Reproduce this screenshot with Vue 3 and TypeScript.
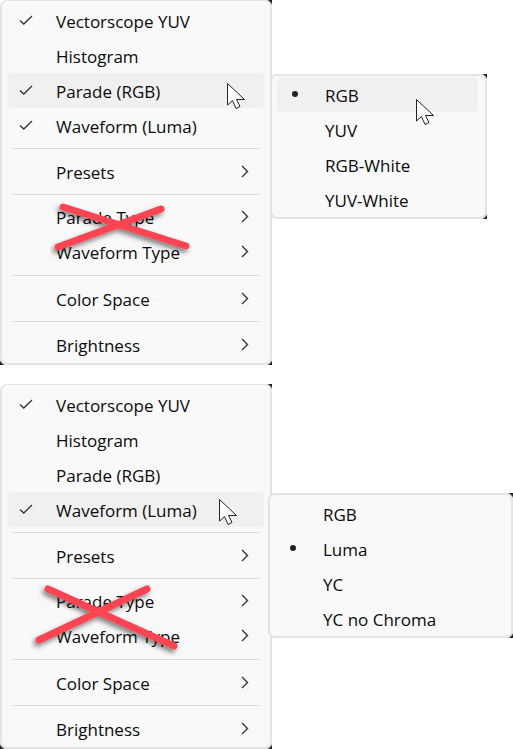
<script setup lang="ts">
interface Row { label?: string; check?: boolean; arrow?: boolean; hover?: boolean; divider?: boolean; before?: boolean; after?: boolean }
const top: Row[] = [
  { label: 'Vectorscope YUV', check: true },
  { label: 'Histogram' },
  { label: 'Parade (RGB)', check: true, hover: true },
  { label: 'Waveform (Luma)', check: true },
  { divider: true },
  { label: 'Presets', arrow: true },
  { divider: true, before: true },
  { label: 'Parade Type', arrow: true },
  { label: 'Waveform Type', arrow: true },
  { divider: true, after: true },
  { label: 'Color Space', arrow: true },
  { divider: true },
  { label: 'Brightness', arrow: true }
]
const bottom: Row[] = top.map((r) => {
  if (r.label === 'Parade (RGB)') return { label: r.label }
  if (r.label === 'Waveform (Luma)') return { label: r.label, check: true, hover: true }
  return r
})
const panels = [
  {
    rows: top,
    sub: ['RGB', 'YUV', 'RGB-White', 'YUV-White'],
    selected: 'RGB',
    hoverSub: true,
    subClass: 'sub-a',
    cursors: ['cur-a1', 'cur-a2'],
    cross: 'cross-a',
    lines: [[13, 9, 136, 48], [111, 11, 8, 49]]
  },
  {
    rows: bottom,
    sub: ['RGB', 'Luma', 'YC', 'YC no Chroma'],
    selected: 'Luma',
    hoverSub: false,
    subClass: 'sub-b',
    cursors: ['cur-b1'],
    cross: 'cross-b',
    lines: [[18, 10, 144, 67], [117, 10, 9, 61]]
  }
]
</script>

<template>
  <div class="page">
    <section v-for="(p, i) in panels" :key="i" class="panel">
      <div class="frame">
        <div class="menu">
          <template v-for="(r, j) in p.rows" :key="j">
            <div v-if="r.divider" class="divider" :class="{ before: r.before, after: r.after }"></div>
            <div v-else class="row" :class="{ hover: r.hover }">
              <svg v-if="r.check" class="check" width="14" height="12" viewBox="0 0 14 12">
                <path d="M1 6.5 L4.8 10 L13 2" fill="none" stroke="#333" stroke-width="1.3" />
              </svg>
              <span class="label">{{ r.label }}</span>
              <svg v-if="r.arrow" class="arrow" width="8" height="13" viewBox="0 0 8 13">
                <path d="M1 1 L6.5 6.5 L1 12" fill="none" stroke="#333" stroke-width="1.4" />
              </svg>
            </div>
          </template>
        </div>
      </div>

      <div class="sub-frame" :class="p.subClass">
        <div class="sub">
          <div
            v-for="s in p.sub"
            :key="s"
            class="row"
            :class="{ hover: p.hoverSub && s === p.selected }"
          >
            <span v-if="s === p.selected" class="dot"></span>
            <span class="label">{{ s }}</span>
          </div>
        </div>
      </div>

      <svg v-for="c in p.cursors" :key="c" class="cursor" :class="c" width="20" height="29" viewBox="0 0 20 29">
        <path d="M1.5 1.5 V23 L6.5 18.5 L10 26.5 L14 24.5 L10.5 17.5 L18.5 17.5 Z" fill="#fff" stroke="#222" stroke-width="1" />
      </svg>

      <svg class="cross" :class="p.cross" width="170" height="90" viewBox="0 0 170 90">
        <defs>
          <filter :id="'sh' + i" x="-10%" y="-20%" width="120%" height="150%">
            <feDropShadow dx="-2" dy="3" stdDeviation="2.5" flood-color="#000" flood-opacity="0.5" />
          </filter>
        </defs>
        <g :filter="'url(#sh' + i + ')'" stroke="#fb4552" stroke-width="7" stroke-linecap="round">
          <line v-for="(l, k) in p.lines" :key="k" :x1="l[0]" :y1="l[1]" :x2="l[2]" :y2="l[3]" />
        </g>
      </svg>
    </section>
  </div>
</template>

<style scoped>
.page {
  width: 513px;
  height: 749px;
  background: #fff;
  display: flex;
  flex-direction: column;
  gap: 19px;
  overflow: hidden;
  font-family: "Open Sans", "Noto Sans", sans-serif;
}
.panel {
  position: relative;
  height: 365px;
}
.sub-frame {
  background:
    linear-gradient(to top right, transparent 55%, #222 80%) top right / 7px 7px no-repeat,
    linear-gradient(to bottom right, transparent 55%, #222 80%) bottom right / 7px 7px no-repeat;
}
.frame {
  width: 272px;
  height: 365px;
  background:
    linear-gradient(to top right, transparent 55%, #222 80%) top right / 7px 7px no-repeat,
    linear-gradient(to bottom right, transparent 55%, #222 80%) bottom right / 7px 7px no-repeat,
    linear-gradient(to bottom left, transparent 55%, #222 80%) bottom left / 7px 7px no-repeat;
}
.menu {
  box-sizing: border-box;
  height: 100%;
  padding: 2px 6px 0;
  background: #f9f9f9;
  border: 2px solid #e4e4e4;
  border-top-width: 1px;
  border-radius: 7px;
}
.row {
  position: relative;
  height: 35px;
  display: flex;
  align-items: center;
  border-radius: 4px;
  color: #0b0b0b;
  font-size: 17px;
}
.hover { background: #f0f0f0; }
.label {
  position: absolute;
  left: 48px;
  top: 7px;
  white-space: nowrap;
}
.check {
  position: absolute;
  left: 11px;
  top: 11px;
}
.arrow {
  position: absolute;
  right: 15px;
  top: 11px;
}
.divider {
  height: 1px;
  margin: 5px;
  background: #d9d9d9;
}
.divider.before { margin-bottom: 4px; }
.divider.after { margin-top: 6px; }
.sub-frame {
  position: absolute;
  height: 145px;
}
.sub {
  box-sizing: border-box;
  height: 100%;
  padding: 1px 7px 1px 5px;
  background: #f9f9f9;
  border: 2px solid #e4e4e4;
  border-radius: 7px;
}
.sub-a { left: 270px; top: 74px; width: 217px; }
.sub-b { left: 268px; top: 109px; width: 245px; }
.dot {
  position: absolute;
  left: 15px;
  top: 14px;
  width: 6px;
  height: 6px;
  border-radius: 50%;
  background: #222;
}
.cursor { position: absolute; }
.cur-a1 { left: 226px; top: 82px; }
.cur-a2 { left: 415px; top: 98px; }
.cur-b1 { left: 218px; top: 114px; }
.cross { position: absolute; pointer-events: none; }
.cross-a { left: 50px; top: 198px; }
.cross-b { left: 30px; top: 195px; }
</style>
